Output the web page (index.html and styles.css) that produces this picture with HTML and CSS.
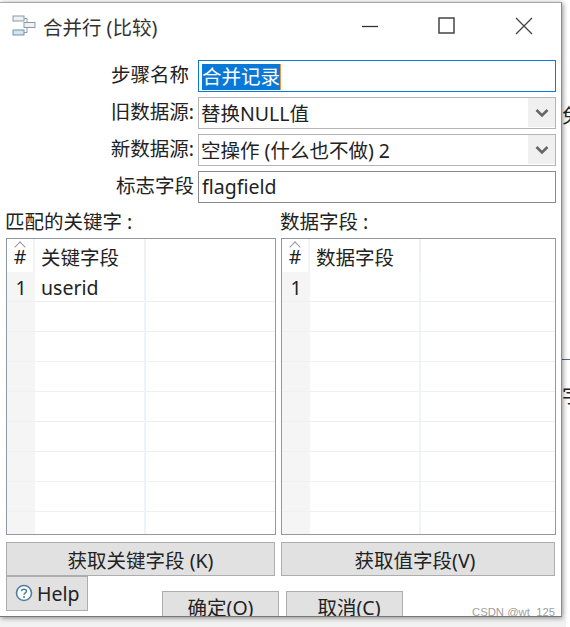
FILE: index.html
```html
<!DOCTYPE html>
<html lang="zh-CN">
<head>
    <meta charset="UTF-8">
    <title>合并行 (比较)</title>
    <link rel="stylesheet" href="styles.css">
</head>
<body>
    <div class="behind">
        <span class="behind-a">免</span>
        <span class="behind-line"></span>
        <span class="behind-b">字</span>
        <span class="behind-strip"></span>
    </div>
    <div class="window">
        <div class="titlebar">
            <svg class="app-icon" width="26" height="22" viewBox="0 0 26 22" fill="none">
                <rect x="1" y="1" width="11" height="5" stroke="#8a9aa8" fill="#eef2f5"/>
                <rect x="1" y="15" width="11" height="5" stroke="#6f93ad" fill="#d5e3ec"/>
                <rect x="12" y="7.500" width="11" height="5" stroke="#8a9aa8" fill="#eef2f5"/>
                <path d="M12 3.500H15V7.500M12 17.500H15V12.500" stroke="#8a9aa8"/>
            </svg>
            <span class="title">合并行 (比较)</span>
            <div class="controls">
                <svg width="18" height="18" viewBox="0 0 18 18"><path d="M1 9.500H17" stroke="#333" stroke-width="1.300"/></svg>
                <svg width="18" height="18" viewBox="0 0 18 18"><rect x="1" y="1" width="15" height="15" fill="none" stroke="#444" stroke-width="1.500"/></svg>
                <svg width="18" height="18" viewBox="0 0 18 18"><path d="M1 1L17 17M17 1L1 17" stroke="#444" stroke-width="1.300"/></svg>
            </div>
        </div>

        <div class="form">
            <label class="first">步骤名称</label>
            <div class="field focused"><span class="selected">合并记录</span></div>
            <label>旧数据源:</label>
            <div class="field combo"><span>替换NULL值</span><span class="arrow"><svg width="14" height="10" viewBox="0 0 14 10"><path d="M1.500 2L7 7.500L12.500 2" fill="none" stroke="#666" stroke-width="2.600"/></svg></span></div>
            <label>新数据源:</label>
            <div class="field combo"><span>空操作 (什么也不做) 2</span><span class="arrow"><svg width="14" height="10" viewBox="0 0 14 10"><path d="M1.500 2L7 7.500L12.500 2" fill="none" stroke="#666" stroke-width="2.600"/></svg></span></div>
            <label>标志字段</label>
            <div class="field plain"><span>flagfield</span></div>
        </div>

        <div class="panels">
            <div class="panel">
                <div class="panel-label">匹配的关键字 :</div>
                <div class="grid">
                    <div class="grid-head">
                        <div class="cell num"><span class="sort"></span>#</div>
                        <div class="cell name">关键字段</div>
                        <div class="cell rest"></div>
                    </div>
                    <div class="grid-row"><div class="cell num">1</div><div class="cell name">userid</div><div class="cell rest"></div></div>
                    <div class="grid-row"><div class="cell num"></div><div class="cell name"></div><div class="cell rest"></div></div>
                    <div class="grid-row"><div class="cell num"></div><div class="cell name"></div><div class="cell rest"></div></div>
                    <div class="grid-row"><div class="cell num"></div><div class="cell name"></div><div class="cell rest"></div></div>
                    <div class="grid-row"><div class="cell num"></div><div class="cell name"></div><div class="cell rest"></div></div>
                    <div class="grid-row"><div class="cell num"></div><div class="cell name"></div><div class="cell rest"></div></div>
                    <div class="grid-row"><div class="cell num"></div><div class="cell name"></div><div class="cell rest"></div></div>
                    <div class="grid-row"><div class="cell num"></div><div class="cell name"></div><div class="cell rest"></div></div>
                    <div class="grid-row last"><div class="cell num"></div><div class="cell name"></div><div class="cell rest"></div></div>
                </div>
                <button class="btn wide">获取关键字段 (K)</button>
            </div>
            <div class="panel">
                <div class="panel-label">数据字段 :</div>
                <div class="grid">
                    <div class="grid-head">
                        <div class="cell num"><span class="sort"></span>#</div>
                        <div class="cell name">数据字段</div>
                        <div class="cell rest"></div>
                    </div>
                    <div class="grid-row"><div class="cell num">1</div><div class="cell name"></div><div class="cell rest"></div></div>
                    <div class="grid-row"><div class="cell num"></div><div class="cell name"></div><div class="cell rest"></div></div>
                    <div class="grid-row"><div class="cell num"></div><div class="cell name"></div><div class="cell rest"></div></div>
                    <div class="grid-row"><div class="cell num"></div><div class="cell name"></div><div class="cell rest"></div></div>
                    <div class="grid-row"><div class="cell num"></div><div class="cell name"></div><div class="cell rest"></div></div>
                    <div class="grid-row"><div class="cell num"></div><div class="cell name"></div><div class="cell rest"></div></div>
                    <div class="grid-row"><div class="cell num"></div><div class="cell name"></div><div class="cell rest"></div></div>
                    <div class="grid-row"><div class="cell num"></div><div class="cell name"></div><div class="cell rest"></div></div>
                    <div class="grid-row last"><div class="cell num"></div><div class="cell name"></div><div class="cell rest"></div></div>
                </div>
                <button class="btn wide values">获取值字段(V)</button>
            </div>
        </div>

        <div class="footer">
            <button class="btn help">
                <svg width="18" height="18" viewBox="0 0 18 18"><circle cx="9" cy="9" r="7.500" fill="#fff" stroke="#4f7f9f" stroke-width="1.600"/><path d="M6.500 7.200C6.500 4.500 11.500 4.500 11.500 7.200C11.500 8.800 9 8.800 9 10.800" fill="none" stroke="#4f7f9f" stroke-width="1.500"/><circle cx="9" cy="13" r="1" fill="#4f7f9f"/></svg>
                <span>Help</span>
            </button>
            <button class="btn action ok">确定(O)</button>
            <button class="btn action cancel">取消(C)</button>
            <span class="watermark">CSDN @wt_125</span>
        </div>
    </div>
</body>
</html>
```

FILE: styles.css
```css
* {
    box-sizing: border-box;
}
body {
    margin: 0;
    width: 570px;
    height: 627px;
    position: relative;
    overflow: hidden;
    background-color: #fff;
    color: #222;
    font-family: "Noto Sans", "Noto Sans CJK SC", sans-serif;
    font-size: 19.500px;
}
/* stuff from the page behind the dialog */
.behind-a, .behind-b {
    position: absolute;
    left: 562px;
    line-height: 24px;
}
.behind-a { top: 104px; }
.behind-b { top: 384px; }
.behind-line {
    position: absolute;
    left: 562px;
    top: 359px;
    width: 8px;
    height: 1px;
    background-color: #4a6a85;
}
.behind-strip {
    position: absolute;
    left: 0;
    top: 617px;
    width: 566px;
    height: 10px;
    background-color: #f2f2f2;
}
.window {
    position: relative;
    width: 562px;
    height: 615px;
    margin-top: 2px;
    overflow: hidden;
    background-color: #fff;
    border-top: 1px solid #a8a8a8;
    border-right: 1px solid #8c8c8c;
    border-bottom: 1px solid #777;
    box-shadow: 1px 1px 5px rgba(0,0,0,0.45);
}
.titlebar {
    display: flex;
    align-items: center;
    height: 50px;
    padding-left: 12px;
    padding-bottom: 4px;
}
.app-icon {
    margin-right: 5px;
}
.title {
    color: #333;
}
.controls {
    display: flex;
    gap: 59px;
    margin-left: auto;
    margin-right: 28px;
}
.form {
    display: grid;
    grid-template-columns: 194px 358px;
    grid-auto-rows: 32px;
    row-gap: 5px;
    column-gap: 4px;
    padding-top: 7px;
}
.form label {
    text-align: right;
    line-height: 30px;
}
.form label.first {
    padding-right: 5px;
}
.field {
    display: flex;
    align-items: center;
    justify-content: space-between;
    height: 32px;
    padding-left: 2px;
    padding-bottom: 1px;
    border: 1.500px solid #b4b4b4;
    white-space: nowrap;
}
.field.focused {
    border-color: #0a78d7;
    padding: 1px 0 0 3px;
}
.field.plain {
    border-color: #8a8a8a;
    padding-left: 3px;
}
.selected {
    background-color: #0a78d7;
    border-right: 1px solid #e8984a;
    color: #fff;
    line-height: 26px;
}
.arrow {
    display: flex;
    align-items: center;
    justify-content: center;
    width: 27px;
    height: 29px;
    background-color: #f0f0f0;
}
.panels {
    display: grid;
    grid-template-columns: 270px 275px;
    column-gap: 5px;
    padding-left: 6px;
    padding-top: 5px;
}
.panel-label {
    height: 30px;
    line-height: 28px;
    margin-left: -1px;
    white-space: nowrap;
}
.grid {
    height: 297px;
    overflow: hidden;
    border: 1px solid #8f98a3;
}
.grid-head, .grid-row {
    display: flex;
}
.grid-head {
    height: 33px;
}
.grid-row {
    height: 30px;
    border-bottom: 1px solid #f0f0f0;
}
.grid-row.last {
    border-bottom: 0;
}
.cell {
    line-height: 31px;
}
.num {
    position: relative;
    width: 28px;
    text-align: center;
    background-color: #f5f5f5;
}
.grid-head .num {
    background-color: #fff;
    border-right: 2px solid #f3f3f3;
    padding-top: 2px;
}
.name {
    width: 111px;
    padding-left: 4px;
    border-right: 2px solid #eef2fa;
    border-left: 2px solid #fff;
}
.grid-head .name {
    border-right-color: #f0f0f0;
    border-left: 0;
    padding-left: 6px;
    padding-top: 3px;
}
.rest {
    flex: 1;
}
/* little sort caret above the # */
.sort {
    position: absolute;
    left: 9px;
    top: 4px;
    width: 8px;
    height: 8px;
    border-top: 1px solid #999;
    border-left: 1px solid #999;
    transform: rotate(45deg);
}
.btn {
    display: block;
    padding: 0;
    font: inherit;
    color: #222;
    background-color: #e1e1e1;
    border: 1.500px solid #adadad;
}
.wide {
    width: calc(100% - 1px);
    height: 34px;
    margin-top: 7px;
}
.values {
    padding-right: 6px;
}
.footer {
    position: relative;
    display: flex;
    align-items: flex-start;
    height: 41px;
    padding-left: 6px;
}
.help {
    display: flex;
    align-items: center;
    gap: 4px;
    width: 82px;
    height: 35px;
    padding-left: 8px;
    padding-bottom: 1px;
}
.action {
    width: 117px;
    height: 40px;
    margin-top: 15px;
    padding-bottom: 6px;
    line-height: 30px;
}
.ok {
    margin-left: 74px;
    margin-right: 7px;
}
.cancel {
    padding-left: 9px;
}
.watermark {
    position: absolute;
    left: 472px;
    top: 30px;
    font-family: "Liberation Sans", sans-serif;
    font-size: 11.300px;
    color: #a0a0a0;
}
```
